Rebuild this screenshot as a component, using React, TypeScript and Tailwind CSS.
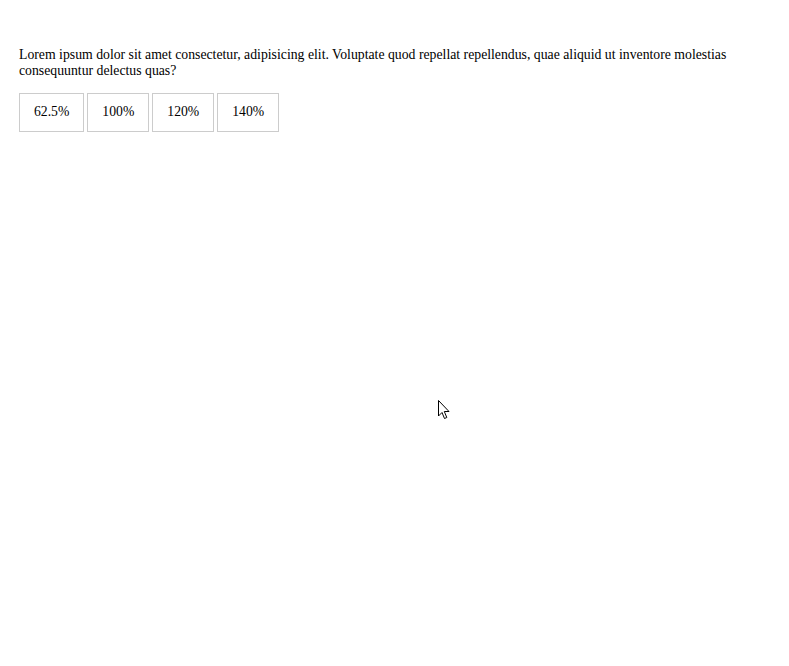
import React from "react";

export default function App() {
  const sizes = ["62.5%", "100%", "120%", "140%"];
  return (
    <div className="relative min-h-[666px] w-full bg-white text-black" style={{ fontFamily: '"Liberation Serif", "Times New Roman", serif' }}>
      <div className="px-[19px] pt-[47px]">
        <p className="text-[13.76px] leading-[16px]">
          Lorem ipsum dolor sit amet consectetur, adipisicing elit. Voluptate quod repellat repellendus, quae aliquid ut inventore molestias consequuntur delectus quas?
        </p>
        <div className="mt-[14px] flex gap-[3px]">
          {sizes.map((s) => (
            <button
              key={s}
              className="flex h-[39px] items-center justify-center border border-[#cccccc] bg-white px-[14px] pb-[2px] text-[13.7px] leading-[16px] text-black"
              style={{ fontFamily: '"Liberation Serif", "Times New Roman", serif' }}
            >
              {s}
            </button>
          ))}
        </div>
      </div>
      <svg
        className="absolute left-[437px] top-[399px]"
        width="14"
        height="21"
        viewBox="0 0 14 21"
      >
        <path
          d="M1.5 1.5 L1.5 17 L5 13.5 L7.5 19.5 L9.8 18.5 L7.3 12.5 L12 12.5 Z"
          fill="white"
          stroke="black"
          strokeWidth="1"
          strokeLinejoin="miter"
        />
      </svg>
    </div>
  );
}
